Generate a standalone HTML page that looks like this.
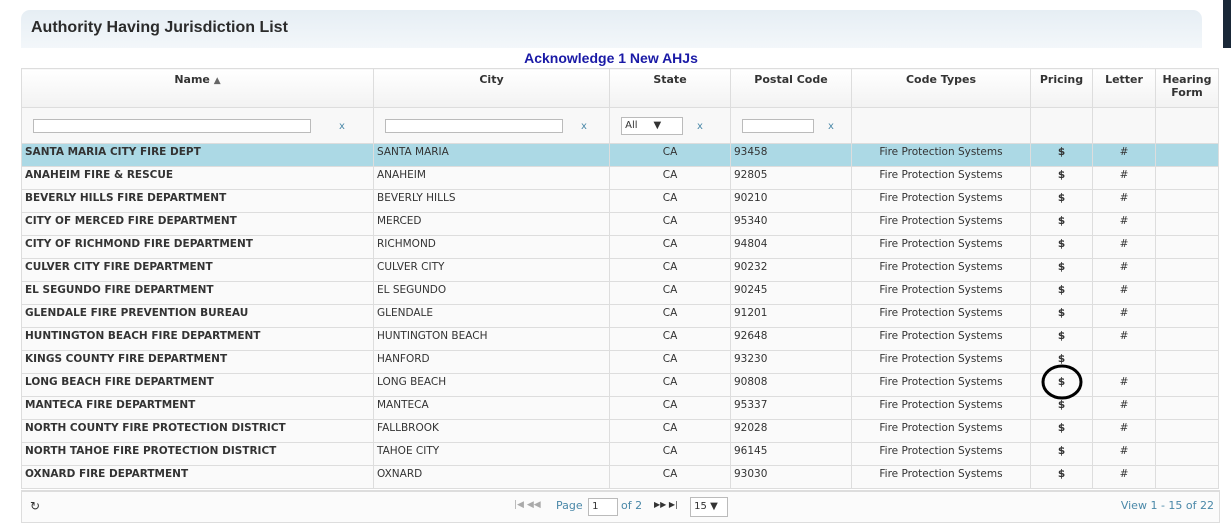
<!DOCTYPE html>
<html><head><meta charset="utf-8"><style>
body{margin:0;width:1231px;height:529px;background:#fff;position:relative;overflow:hidden;font-family:"DejaVu Sans","Liberation Sans",sans-serif;}
.title{position:absolute;left:21px;top:10px;width:1181px;height:38px;border-radius:9px 9px 0 0;background:linear-gradient(#e6eef4,#f3f7fa);}
.title span{position:absolute;left:10px;top:9px;font:bold 16px "Liberation Sans",sans-serif;color:#2b2b2b;}
.ack{position:absolute;left:0;width:1222px;text-align:center;top:50px;font:bold 14px "Liberation Sans",sans-serif;color:#1a1aa6;}
table{position:absolute;left:21px;top:68px;border-collapse:collapse;table-layout:fixed;font-size:10.5px;color:#333;}
td,th{border:1px solid #ddd;padding:0 3px;overflow:hidden;white-space:nowrap;}
th{height:34px;vertical-align:top;padding-top:4px;font-weight:bold;background:linear-gradient(#fff,#f2f2f2);color:#333;font-size:11px;}
tr.f td{height:35px;background:#f8f8f8;}
tr.d td{height:21px;vertical-align:top;padding-top:1px;padding-bottom:0;background:#fafafa;line-height:14px;}
tr.d.s td{background:#acd9e5;}
td.n{font-weight:bold;}
td.c{text-align:center;}
.inp{display:inline-block;border:1px solid #bbb;height:12px;background:#fff;vertical-align:middle;}
.x{color:#4a88a8;font-size:10px;}
.foot{position:absolute;left:21px;top:490px;width:1197px;height:30px;border:1px solid #ddd;border-top:2px solid #ddd;background:#fbfbfb;font-size:11px;color:#333;}
</style></head><body>
<div style="position:absolute;left:1223px;top:0;width:8px;height:48px;background:#1a2838"></div>
<div class="title"><span>Authority Having Jurisdiction List</span></div>
<div class="ack">Acknowledge 1 New AHJs</div>
<table>
<colgroup><col style="width:352px"><col style="width:236px"><col style="width:121px"><col style="width:121px"><col style="width:179px"><col style="width:62px"><col style="width:63px"><col style="width:63px"></colgroup>
<tr><th>Name <span style="font-size:9px;color:#666">&#9650;</span></th><th>City</th><th>State</th><th>Postal Code</th><th>Code Types</th><th>Pricing</th><th>Letter</th><th>Hearing<br>Form</th></tr>
<tr class="f"><td><span class="inp" style="width:276px;margin-left:8px"></span><span class="x" style="margin-left:28px">x</span></td><td><span class="inp" style="width:176px;margin-left:8px"></span><span class="x" style="margin-left:18px">x</span></td><td><span class="inp" style="width:60px;height:16px;margin-left:8px;font-size:10px;line-height:16px">&nbsp;All &nbsp;&nbsp;&nbsp;&nbsp;&#9660;</span><span class="x" style="margin-left:14px">x</span></td><td><span class="inp" style="width:70px;margin-left:8px"></span><span class="x" style="margin-left:14px">x</span></td><td></td><td></td><td></td><td></td></tr>
<tr class="d s"><td class="n">SANTA MARIA CITY FIRE DEPT</td><td>SANTA MARIA</td><td class="c">CA</td><td>93458</td><td class="c">Fire Protection Systems</td><td class="c n">$</td><td class="c">#</td><td></td></tr>
<tr class="d"><td class="n">ANAHEIM FIRE &amp; RESCUE</td><td>ANAHEIM</td><td class="c">CA</td><td>92805</td><td class="c">Fire Protection Systems</td><td class="c n">$</td><td class="c">#</td><td></td></tr>
<tr class="d"><td class="n">BEVERLY HILLS FIRE DEPARTMENT</td><td>BEVERLY HILLS</td><td class="c">CA</td><td>90210</td><td class="c">Fire Protection Systems</td><td class="c n">$</td><td class="c">#</td><td></td></tr>
<tr class="d"><td class="n">CITY OF MERCED FIRE DEPARTMENT</td><td>MERCED</td><td class="c">CA</td><td>95340</td><td class="c">Fire Protection Systems</td><td class="c n">$</td><td class="c">#</td><td></td></tr>
<tr class="d"><td class="n">CITY OF RICHMOND FIRE DEPARTMENT</td><td>RICHMOND</td><td class="c">CA</td><td>94804</td><td class="c">Fire Protection Systems</td><td class="c n">$</td><td class="c">#</td><td></td></tr>
<tr class="d"><td class="n">CULVER CITY FIRE DEPARTMENT</td><td>CULVER CITY</td><td class="c">CA</td><td>90232</td><td class="c">Fire Protection Systems</td><td class="c n">$</td><td class="c">#</td><td></td></tr>
<tr class="d"><td class="n">EL SEGUNDO FIRE DEPARTMENT</td><td>EL SEGUNDO</td><td class="c">CA</td><td>90245</td><td class="c">Fire Protection Systems</td><td class="c n">$</td><td class="c">#</td><td></td></tr>
<tr class="d"><td class="n">GLENDALE FIRE PREVENTION BUREAU</td><td>GLENDALE</td><td class="c">CA</td><td>91201</td><td class="c">Fire Protection Systems</td><td class="c n">$</td><td class="c">#</td><td></td></tr>
<tr class="d"><td class="n">HUNTINGTON BEACH FIRE DEPARTMENT</td><td>HUNTINGTON BEACH</td><td class="c">CA</td><td>92648</td><td class="c">Fire Protection Systems</td><td class="c n">$</td><td class="c">#</td><td></td></tr>
<tr class="d"><td class="n">KINGS COUNTY FIRE DEPARTMENT</td><td>HANFORD</td><td class="c">CA</td><td>93230</td><td class="c">Fire Protection Systems</td><td class="c n">$</td><td class="c"></td><td></td></tr>
<tr class="d"><td class="n">LONG BEACH FIRE DEPARTMENT</td><td>LONG BEACH</td><td class="c">CA</td><td>90808</td><td class="c">Fire Protection Systems</td><td class="c n">$</td><td class="c">#</td><td></td></tr>
<tr class="d"><td class="n">MANTECA FIRE DEPARTMENT</td><td>MANTECA</td><td class="c">CA</td><td>95337</td><td class="c">Fire Protection Systems</td><td class="c n">$</td><td class="c">#</td><td></td></tr>
<tr class="d"><td class="n">NORTH COUNTY FIRE PROTECTION DISTRICT</td><td>FALLBROOK</td><td class="c">CA</td><td>92028</td><td class="c">Fire Protection Systems</td><td class="c n">$</td><td class="c">#</td><td></td></tr>
<tr class="d"><td class="n">NORTH TAHOE FIRE PROTECTION DISTRICT</td><td>TAHOE CITY</td><td class="c">CA</td><td>96145</td><td class="c">Fire Protection Systems</td><td class="c n">$</td><td class="c">#</td><td></td></tr>
<tr class="d"><td class="n">OXNARD FIRE DEPARTMENT</td><td>OXNARD</td><td class="c">CA</td><td>93030</td><td class="c">Fire Protection Systems</td><td class="c n">$</td><td class="c">#</td><td></td></tr>
</table>
<div class="foot">
<span style="position:absolute;left:8px;top:7px;font-size:12px">&#8635;</span>
<span style="position:absolute;left:492px;top:8px;color:#aaa;font-size:9px">|&#9664; &#9664;&#9664;</span>
<span style="position:absolute;left:534px;top:7px;color:#4a88a8">Page</span>
<span class="inp" style="position:absolute;left:566px;top:6px;width:28px;height:16px;font-size:10px;line-height:16px">&nbsp;1</span>
<span style="position:absolute;left:599px;top:7px;color:#4a88a8">of 2</span>
<span style="position:absolute;left:632px;top:8px;font-size:8px">&#9654;&#9654; &#9654;|</span>
<span class="inp" style="position:absolute;left:668px;top:5px;width:36px;height:18px;font-size:10px;line-height:18px">&nbsp;15 &#9660;</span>
<span style="position:absolute;right:5px;top:7px;color:#4a88a8">View 1 - 15 of 22</span>
</div>
<svg style="position:absolute;left:0;top:0" width="1231" height="529"><ellipse cx="1062" cy="382" rx="19" ry="16" fill="none" stroke="#000" stroke-width="3"/></svg>
</body></html>
